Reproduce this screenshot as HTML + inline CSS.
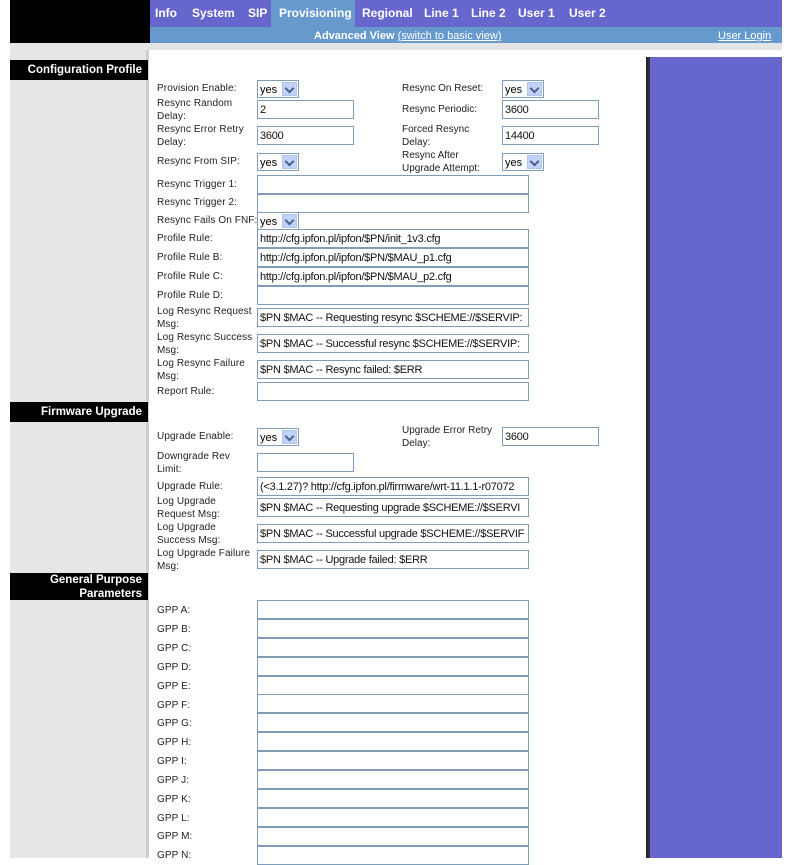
<!DOCTYPE html>
<html><head><meta charset="utf-8"><style>
*{margin:0;padding:0;box-sizing:border-box}
body{width:791px;height:858px;overflow:hidden;background:#fff;position:relative;font-family:"Liberation Sans",Arial,sans-serif}
div,span{position:absolute}
.l{left:157px;font-size:10px;color:#222;line-height:13px;letter-spacing:0.1px}
.r{left:402px;font-size:10px;color:#222;line-height:13px}
.i{height:19px;border:1px solid #7f9db9;background:#fff;font-size:11px;letter-spacing:-0.25px;color:#111;padding:2px 0 0 2px;white-space:nowrap;overflow:hidden;line-height:14px}
.s{width:42px;height:18px;border:1px solid #7f9db9;background:#fff;font-size:11px;padding:2px 0 0 2px;line-height:14px}
.s b{position:absolute;right:1px;top:1px;width:15px;height:14px;background:#c1d3fb;border:1px solid #b2c6ec}
.s b:after{content:"";position:absolute;left:3px;top:2px;width:5px;height:5px;border-right:2px solid #4d6185;border-bottom:2px solid #4d6185;transform:rotate(45deg)}
.w{left:257px;width:272px}
.n{width:97px}
.h{left:10px;width:138px;background:#000;color:#fff;font-weight:bold;font-size:11.5px;text-align:right;padding-right:6px;line-height:14px}
.nav{top:6px;color:#fff;font-weight:bold;font-size:12px}
</style></head><body>
<div style="left:10px;top:0;width:140px;height:43px;background:#000"></div>
<div style="left:150px;top:0;width:632px;height:27px;background:#6666cc"></div>
<div style="left:271px;top:0;width:84px;height:27px;background:#6699cc"></div>
<div style="left:150px;top:27px;width:632px;height:16px;background:#6699cc"></div>
<div style="left:10px;top:43px;width:138px;height:815px;background:#e6e6e6"></div>
<div style="left:148px;top:43px;width:634px;height:7px;background:#e4e4e4"></div>
<div style="left:146px;top:50px;width:3px;height:808px;background:#cfcfcf"></div>
<div style="left:646px;top:57px;width:4px;height:801px;background:linear-gradient(to right,#222,#334)"></div>
<div style="left:650px;top:57px;width:132px;height:801px;background:#6666cc"></div>
<span class="nav" style="left:155px">Info</span>
<span class="nav" style="left:192px">System</span>
<span class="nav" style="left:248px">SIP</span>
<span class="nav" style="left:279px">Provisioning</span>
<span class="nav" style="left:362px">Regional</span>
<span class="nav" style="left:424px">Line 1</span>
<span class="nav" style="left:471px">Line 2</span>
<span class="nav" style="left:518px">User 1</span>
<span class="nav" style="left:569px">User 2</span>
<span style="left:314px;top:30px;color:#fff;font-size:11px;font-weight:bold">Advanced View <u style="font-weight:normal">(switch to basic view)</u></span>
<span style="left:718px;top:30px;color:#fff;font-size:11px;text-decoration:underline">User Login</span>

<div class="h" style="top:60px;height:20px;padding-top:3px">Configuration Profile</div>
<span class="l" style="top:82px">Provision Enable:</span><div class="s" style="left:257px;top:80px">yes<b></b></div>
<span class="r" style="top:82px">Resync On Reset:</span><div class="s" style="left:502px;top:80px">yes<b></b></div>
<span class="l" style="top:97px">Resync Random<br>Delay:</span><div class="i n" style="left:257px;top:100px">2</div>
<span class="r" style="top:103px">Resync Periodic:</span><div class="i n" style="left:502px;top:100px">3600</div>
<span class="l" style="top:123px">Resync Error Retry<br>Delay:</span><div class="i n" style="left:257px;top:126px">3600</div>
<span class="r" style="top:123px">Forced Resync<br>Delay:</span><div class="i n" style="left:502px;top:126px">14400</div>
<span class="l" style="top:155px">Resync From SIP:</span><div class="s" style="left:257px;top:153px">yes<b></b></div>
<span class="r" style="top:149px">Resync After<br>Upgrade Attempt:</span><div class="s" style="left:502px;top:153px">yes<b></b></div>
<span class="l" style="top:178px">Resync Trigger 1:</span><div class="i w" style="top:175px"></div>
<span class="l" style="top:196px">Resync Trigger 2:</span><div class="i w" style="top:194px"></div>
<span class="l" style="top:214px">Resync Fails On FNF:</span><div class="s" style="left:257px;top:212px">yes<b></b></div>
<span class="l" style="top:232px">Profile Rule:</span><div class="i w" style="top:229px">http://cfg.ipfon.pl/ipfon/$PN/init_1v3.cfg</div>
<span class="l" style="top:251px">Profile Rule B:</span><div class="i w" style="top:248px">http://cfg.ipfon.pl/ipfon/$PN/$MAU_p1.cfg</div>
<span class="l" style="top:270px">Profile Rule C:</span><div class="i w" style="top:267px">http://cfg.ipfon.pl/ipfon/$PN/$MAU_p2.cfg</div>
<span class="l" style="top:289px">Profile Rule D:</span><div class="i w" style="top:286px"></div>
<span class="l" style="top:305px">Log Resync Request<br>Msg:</span><div class="i w" style="top:308px">$PN $MAC -- Requesting resync $SCHEME://$SERVIP:</div>
<span class="l" style="top:331px">Log Resync Success<br>Msg:</span><div class="i w" style="top:334px">$PN $MAC -- Successful resync $SCHEME://$SERVIP:</div>
<span class="l" style="top:357px">Log Resync Failure<br>Msg:</span><div class="i w" style="top:360px">$PN $MAC -- Resync failed: $ERR</div>
<span class="l" style="top:385px">Report Rule:</span><div class="i w" style="top:382px"></div>

<div class="h" style="top:402px;height:20px;padding-top:3px">Firmware Upgrade</div>
<span class="l" style="top:430px">Upgrade Enable:</span><div class="s" style="left:257px;top:428px">yes<b></b></div>
<span class="r" style="top:424px">Upgrade Error Retry<br>Delay:</span><div class="i n" style="left:502px;top:427px">3600</div>
<span class="l" style="top:450px">Downgrade Rev<br>Limit:</span><div class="i n" style="left:257px;top:453px"></div>
<span class="l" style="top:480px">Upgrade Rule:</span><div class="i w" style="top:477px">(&lt;3.1.27)? http://cfg.ipfon.pl/firmware/wrt-11.1.1-r07072</div>
<span class="l" style="top:495px">Log Upgrade<br>Request Msg:</span><div class="i w" style="top:498px">$PN $MAC -- Requesting upgrade $SCHEME://$SERVI</div>
<span class="l" style="top:521px">Log Upgrade<br>Success Msg:</span><div class="i w" style="top:524px">$PN $MAC -- Successful upgrade $SCHEME://$SERVIF</div>
<span class="l" style="top:547px">Log Upgrade Failure<br>Msg:</span><div class="i w" style="top:550px">$PN $MAC -- Upgrade failed: $ERR</div>

<div class="h" style="top:573px;height:27px;padding-top:0;line-height:14px">General Purpose<br>Parameters</div>
<span class="l" style="top:604px">GPP A:</span><div class="i w" style="top:600px"></div>
<span class="l" style="top:623px">GPP B:</span><div class="i w" style="top:619px"></div>
<span class="l" style="top:642px">GPP C:</span><div class="i w" style="top:638px"></div>
<span class="l" style="top:661px">GPP D:</span><div class="i w" style="top:657px"></div>
<span class="l" style="top:680px">GPP E:</span><div class="i w" style="top:676px"></div>
<span class="l" style="top:699px">GPP F:</span><div class="i w" style="top:694px"></div>
<span class="l" style="top:717px">GPP G:</span><div class="i w" style="top:713px"></div>
<span class="l" style="top:736px">GPP H:</span><div class="i w" style="top:732px"></div>
<span class="l" style="top:755px">GPP I:</span><div class="i w" style="top:751px"></div>
<span class="l" style="top:774px">GPP J:</span><div class="i w" style="top:770px"></div>
<span class="l" style="top:793px">GPP K:</span><div class="i w" style="top:789px"></div>
<span class="l" style="top:812px">GPP L:</span><div class="i w" style="top:808px"></div>
<span class="l" style="top:830px">GPP M:</span><div class="i w" style="top:827px"></div>
<span class="l" style="top:849px">GPP N:</span><div class="i w" style="top:846px"></div>
</body></html>
